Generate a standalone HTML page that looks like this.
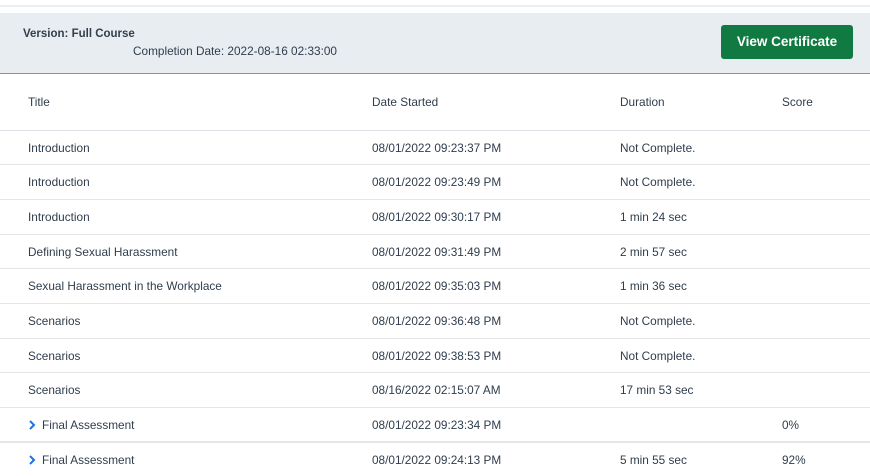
<!DOCTYPE html>
<html><head><style>
body{margin:0;width:870px;height:476px;overflow:hidden;background:#fff;font-family:"Liberation Sans",sans-serif;color:#2f3d4c;font-size:11.8px;position:relative}
.top{position:absolute;left:0;top:5px;width:870px;height:2px;background:#eceef0}
.ban{position:absolute;left:0;top:13px;width:870px;height:60px;background:#e8edf1;border-bottom:1px solid #8795a8}
.v{position:absolute;left:23px;top:15px;font-weight:bold;font-size:11.5px;color:#333f4c}
.c{position:absolute;left:133px;top:31px;font-size:11.8px}
.btn{position:absolute;left:721px;top:12px;width:132px;height:34px;background:#107a42;border-radius:3px;color:#fff;font-weight:bold;font-size:13.5px;line-height:34px;text-align:center}
.row{position:absolute;left:0;width:870px;border-bottom:1px solid #e3e5e8}
.row span{position:absolute;top:50%;transform:translateY(-50%);white-space:nowrap}
.a{left:28px}.b{left:372px}.d{left:620px}.s{left:782px}
.row svg{position:absolute;left:28px;top:50%;margin-top:-6px}
</style></head><body>
<div class="top"></div>
<div class="ban"><div class="v">Version: Full Course</div><div class="c">Completion Date: 2022-08-16 02:33:00</div><div class="btn">View Certificate</div></div>
<div class="row" style="top:74px;height:56px;border-bottom:1px solid #dcdfe3"><span class="a">Title</span><span class="b">Date Started</span><span class="d">Duration</span><span class="s">Score</span></div>
<div class="row" style="top:131px;height:33px"><span class="a">Introduction</span><span class="b">08/01/2022 09:23:37 PM</span><span class="d">Not Complete.</span></div>
<div class="row" style="top:165px;height:34px"><span class="a">Introduction</span><span class="b">08/01/2022 09:23:49 PM</span><span class="d">Not Complete.</span></div>
<div class="row" style="top:200px;height:34px"><span class="a">Introduction</span><span class="b">08/01/2022 09:30:17 PM</span><span class="d">1 min 24 sec</span></div>
<div class="row" style="top:235px;height:33px"><span class="a">Defining Sexual Harassment</span><span class="b">08/01/2022 09:31:49 PM</span><span class="d">2 min 57 sec</span></div>
<div class="row" style="top:269px;height:34px"><span class="a">Sexual Harassment in the Workplace</span><span class="b">08/01/2022 09:35:03 PM</span><span class="d">1 min 36 sec</span></div>
<div class="row" style="top:304px;height:34px"><span class="a">Scenarios</span><span class="b">08/01/2022 09:36:48 PM</span><span class="d">Not Complete.</span></div>
<div class="row" style="top:339px;height:33px"><span class="a">Scenarios</span><span class="b">08/01/2022 09:38:53 PM</span><span class="d">Not Complete.</span></div>
<div class="row" style="top:373px;height:34px"><span class="a">Scenarios</span><span class="b">08/16/2022 02:15:07 AM</span><span class="d">17 min 53 sec</span></div>
<div class="row" style="top:408px;height:33px;border-bottom:2px solid #e3e5e8"><svg width="8" height="12" viewBox="0 0 8 12"><path d="M2 2 L6 6 L2 10" fill="none" stroke="#1a73e8" stroke-width="2"/></svg><span style="left:42px">Final Assessment</span><span class="b">08/01/2022 09:23:34 PM</span><span class="s">0%</span></div>
<div class="row" style="top:443px;height:33px;border:none"><svg width="8" height="12" viewBox="0 0 8 12"><path d="M2 2 L6 6 L2 10" fill="none" stroke="#1a73e8" stroke-width="2"/></svg><span style="left:42px">Final Assessment</span><span class="b">08/01/2022 09:24:13 PM</span><span class="d">5 min 55 sec</span><span class="s">92%</span></div>
</body></html>
